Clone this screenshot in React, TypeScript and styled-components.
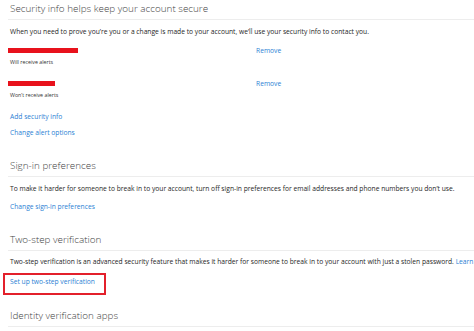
import styled, { createGlobalStyle } from 'styled-components';

const GlobalStyle = createGlobalStyle`
  html, body {
    margin: 0;
    padding: 0;
    background: #ffffff;
    overflow: hidden;
  }
  body {
    font-family: "Open Sans", "Noto Sans", "Liberation Sans", sans-serif;
    color: #262626;
  }
`;

const Page = styled.div`
  width: 474px;
  height: 331px;
  padding-left: 10px;
  box-sizing: border-box;
  overflow: hidden;
`;

const Heading = styled.h2<{ $top: number }>`
  margin: ${(p) => p.$top}px 0 0 -2px;
  padding: 0 0 3px 2px;
  font-size: 9.9px;
  line-height: 16px;
  font-weight: 300;
  color: #444;
  border-bottom: 1px solid #ededed;
  white-space: nowrap;
`;

const Text = styled.p<{ $top: number }>`
  margin: ${(p) => p.$top}px 0 0;
  font-size: 6.7px;
  line-height: 12px;
  white-space: nowrap;
`;

const Link = styled.a<{ $top?: number }>`
  display: block;
  margin-top: ${(p) => p.$top ?? 0}px;
  font-size: 6.7px;
  line-height: 12px;
  color: #2a7fd4;
  text-decoration: none;
  white-space: nowrap;
`;

const InlineLink = styled.a`
  color: #2a7fd4;
  text-decoration: none;
`;

const InfoRow = styled.div<{ $top: number }>`
  display: flex;
  align-items: flex-start;
  margin-top: ${(p) => p.$top}px;
`;

const InfoMain = styled.div`
  width: 246px;
`;

const Redacted = styled.div<{ $width: number }>`
  width: ${(p) => p.$width}px;
  height: 5px;
  margin-left: -2px;
  background: #e8121c;
`;

const AlertNote = styled.div`
  margin-top: 5px;
  font-size: 5.3px;
  line-height: 9px;
  color: #333;
`;

const RemoveLink = styled.a`
  margin-top: -2px;
  font-size: 6.7px;
  line-height: 10px;
  color: #2a7fd4;
  text-decoration: none;
`;

const Highlight = styled.div`
  width: 103px;
  box-sizing: border-box;
  margin: 5px 0 0 -7px;
  padding: 1px 0 5px 5px;
  border: 2px solid #e3202b;
`;

export default function App() {
  return (
    <>
      <GlobalStyle />
      <Page>
        <Heading $top={0}>Security info helps keep your account secure</Heading>
        <Text $top={6}>
          When you need to prove you’re you or a change is made to your account, we’ll use your
          security info to contact you.
        </Text>

        <InfoRow $top={10}>
          <InfoMain>
            <Redacted $width={70} />
            <AlertNote>Will receive alerts</AlertNote>
          </InfoMain>
          <RemoveLink href="#">Remove</RemoveLink>
        </InfoRow>
        <InfoRow $top={14}>
          <InfoMain>
            <Redacted $width={47} />
            <AlertNote>Won’t receive alerts</AlertNote>
          </InfoMain>
          <RemoveLink href="#">Remove</RemoveLink>
        </InfoRow>

        <Link href="#" $top={11}>Add security info</Link>
        <Link href="#" $top={4}>Change alert options</Link>

        <Heading $top={18}>Sign-in preferences</Heading>
        <Text $top={6}>
          To make it harder for someone to break in to your account, turn off sign-in preferences
          for email addresses and phone numbers you don’t use.
        </Text>
        <Link href="#" $top={6}>Change sign-in preferences</Link>

        <Heading $top={18}>Two-step verification</Heading>
        <Text $top={5}>
          Two-step verification is an advanced security feature that makes it harder for someone
          to break in to your account with just a stolen password.{' '}
          <InlineLink href="#">Learn more about two-step verification</InlineLink>
        </Text>
        <Highlight>
          <Link href="#">Set up two-step verification</Link>
        </Highlight>

        <Heading $top={12}>Identity verification apps</Heading>
      </Page>
    </>
  );
}
